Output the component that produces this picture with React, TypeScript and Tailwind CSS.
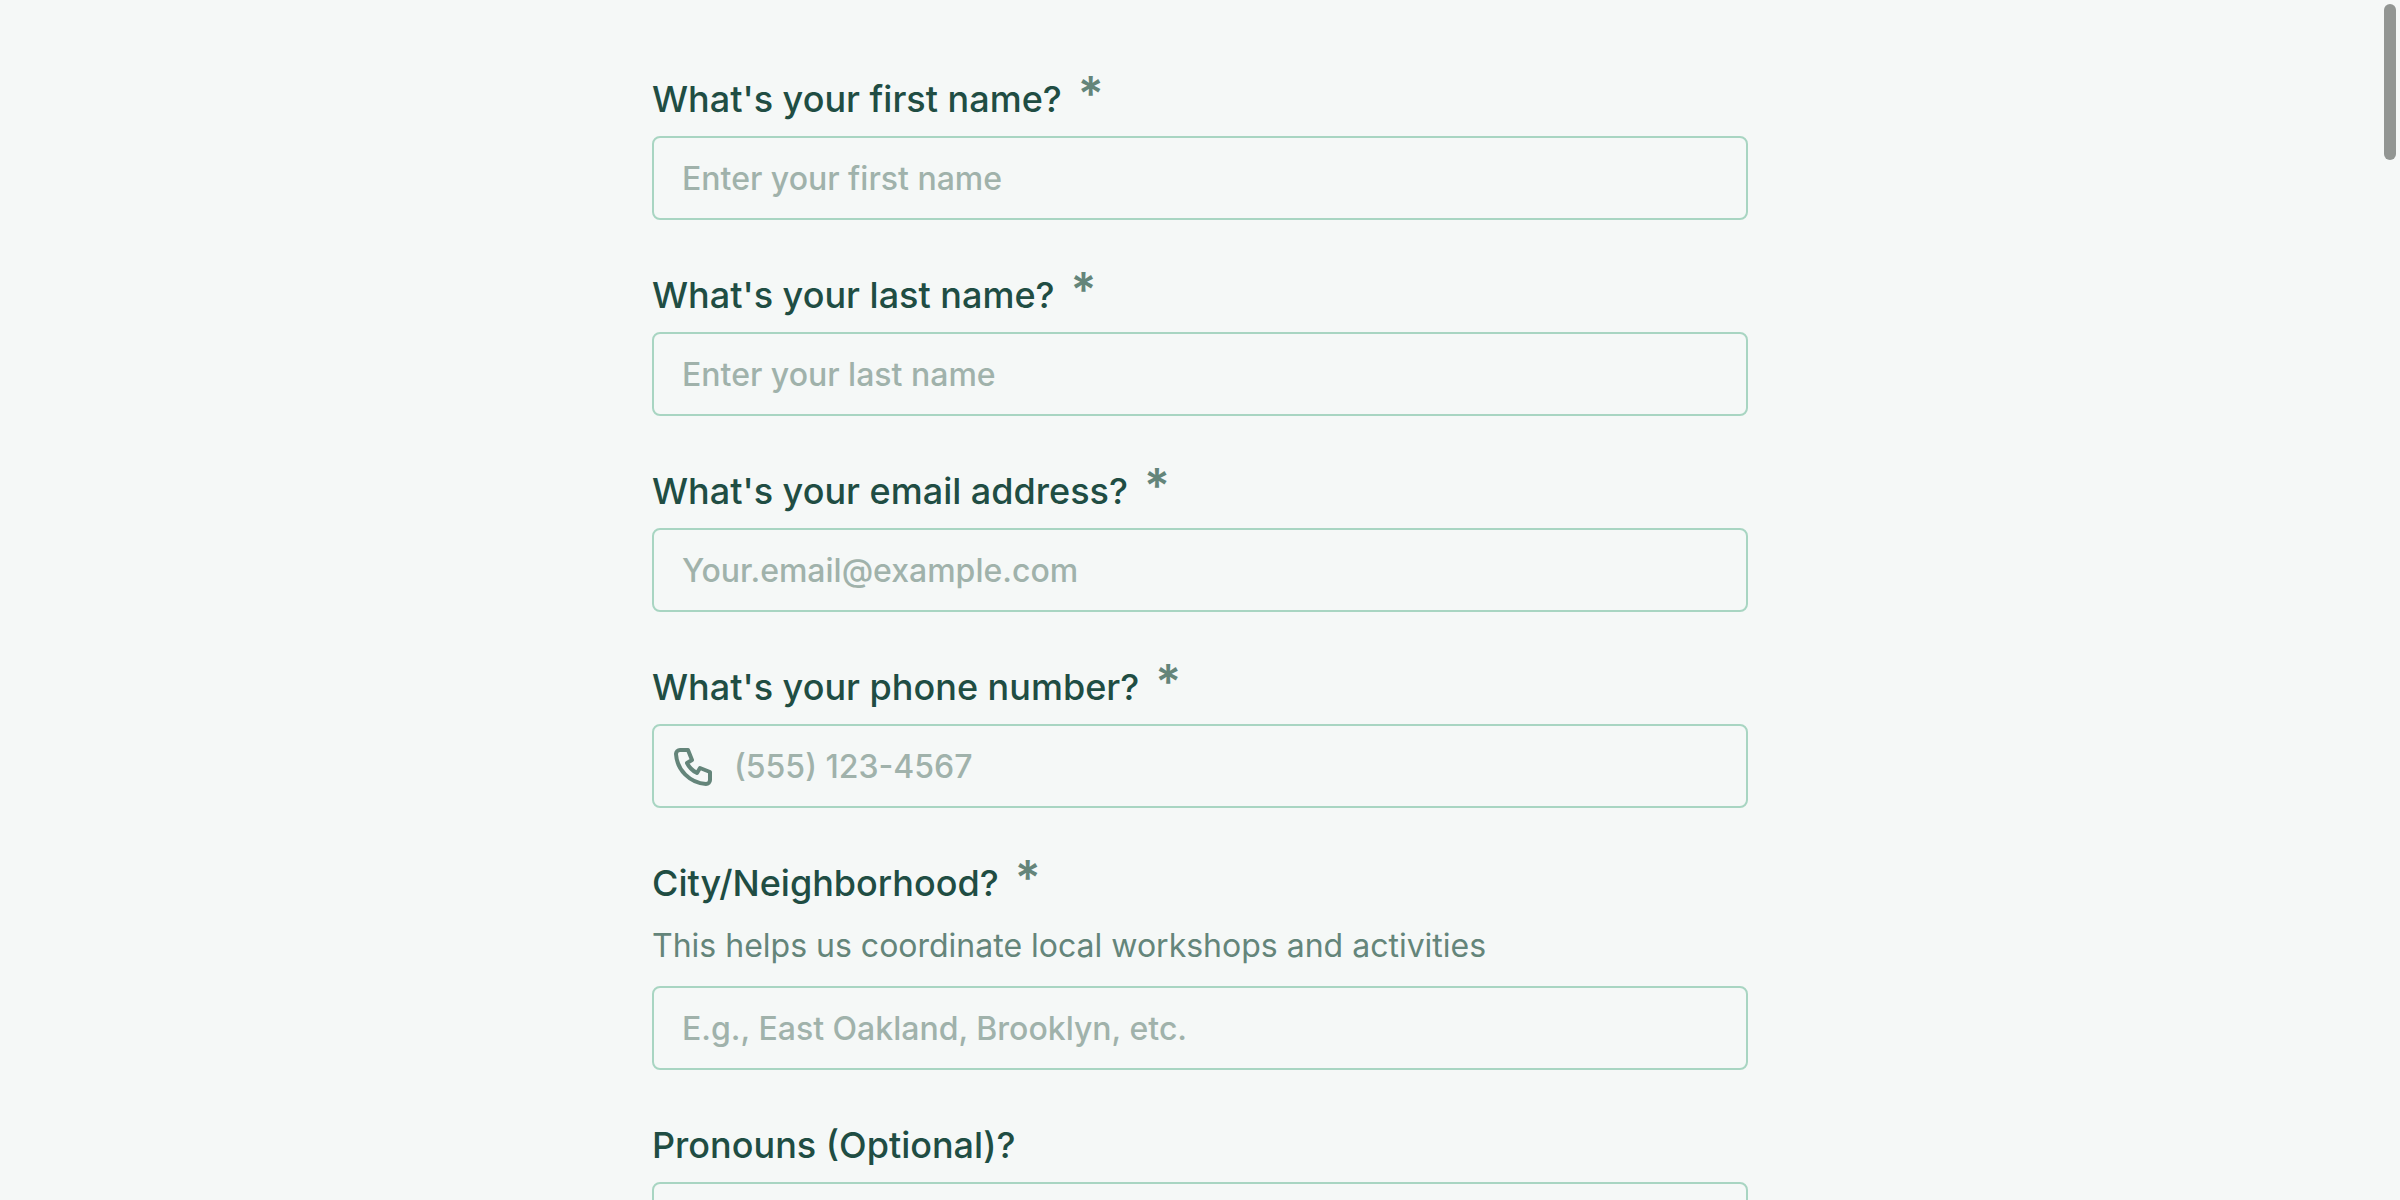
import { clsx } from "clsx";

interface Field {
  id: string;
  label: string;
  type?: string;
  placeholder?: string;
  hint?: string;
  required?: boolean;
  icon?: boolean;
}

const fields: Field[] = [
  {
    id: "first-name",
    label: "What's your first name?",
    placeholder: "Enter your first name",
    required: true,
  },
  {
    id: "last-name",
    label: "What's your last name?",
    placeholder: "Enter your last name",
    required: true,
  },
  {
    id: "email",
    label: "What's your email address?",
    type: "email",
    placeholder: "Your.email@example.com",
    required: true,
  },
  {
    id: "phone",
    label: "What's your phone number?",
    type: "tel",
    placeholder: "(555) 123-4567",
    required: true,
    icon: true,
  },
  {
    id: "city",
    label: "City/Neighborhood?",
    placeholder: "E.g., East Oakland, Brooklyn, etc.",
    hint: "This helps us coordinate local workshops and activities",
    required: true,
  },
  { id: "pronouns", label: "Pronouns (Optional)?" },
];

function PhoneIcon() {
  return (
    <svg
      viewBox="0 0 24 24"
      fill="none"
      stroke="currentColor"
      strokeWidth="2"
      strokeLinecap="round"
      strokeLinejoin="round"
      className="size-12 shrink-0 text-[#64857a]"
      aria-hidden="true"
    >
      <path d="M5 4h4l2 5l-2.5 1.5a11 11 0 0 0 5 5l1.5 -2.5l5 2v4a2 2 0 0 1 -2 2a16 16 0 0 1 -15 -15a2 2 0 0 1 2 -2" />
    </svg>
  );
}

function FormField({ field }: { field: Field }) {
  return (
    <div className="flex flex-col">
      <label
        htmlFor={field.id}
        className="flex text-4xl/[54px] font-medium text-[#204d43]"
      >
        {field.label}
        {field.required && (
          <span className="ml-4 text-5xl/[44px] font-semibold text-[#64857a]">
            *
          </span>
        )}
      </label>
      {field.hint && (
        <p
          id={`${field.id}-hint`}
          className="mt-3 mb-1.5 text-[32px]/[48px] text-[#64857a]"
        >
          {field.hint}
        </p>
      )}
      <div className="mt-2.5 flex h-21 items-center rounded-lg border-2 border-[#a8d5c2] focus-within:border-[#64857a]">
        {field.icon && (
          <span className="pl-4">
            <PhoneIcon />
          </span>
        )}
        <input
          id={field.id}
          type={field.type ?? "text"}
          placeholder={field.placeholder}
          required={field.required}
          aria-describedby={field.hint ? `${field.id}-hint` : undefined}
          className={clsx(
            "h-full min-w-0 flex-1 bg-transparent pr-7 text-[32px] font-medium text-[#204d43] outline-none placeholder:text-[#a0b2ab]",
            field.icon ? "pl-4" : "pl-7"
          )}
        />
      </div>
    </div>
  );
}

export default function App() {
  return (
    <main className="relative h-screen overflow-hidden bg-[#f5f8f7] font-['Inter',sans-serif]">
      <form className="mx-auto flex max-w-[1096px] flex-col gap-12 pt-18">
        {fields.map((field) => (
          <FormField key={field.id} field={field} />
        ))}
      </form>
      <div
        className="absolute top-1 right-1 h-39 w-3 rounded-full bg-[#929693]"
        aria-hidden="true"
      />
    </main>
  );
}
